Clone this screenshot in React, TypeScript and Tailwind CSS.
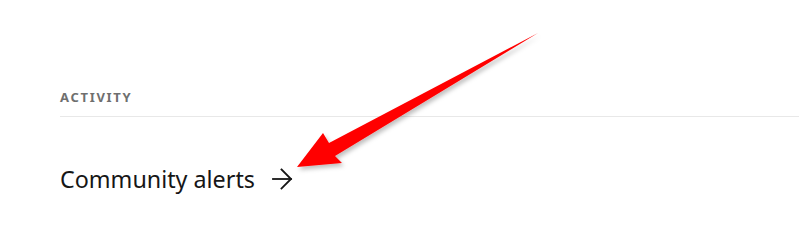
export default function App() {
  return (
    <div className="relative w-[799px] h-[248px] bg-white overflow-hidden" style={{ fontFamily: '"Noto Sans", "Liberation Sans", sans-serif' }}>
      <div className="pl-[60px] pt-[87px]">
        {/* Section header */}
        <div className="pb-[9px] border-b border-[#e8e8e8]">
          <h2 className="text-[13px] leading-[20px] font-bold tracking-[1.7px] text-[#6f6f6f] uppercase">Activity</h2>
        </div>

        <a className="mt-[46px] flex items-center gap-[17px] text-[#161616]">
          <span className="text-[23.3px] leading-[32px]">Community alerts</span>
          <svg width="22" height="22" viewBox="0 0 22 22" fill="none" stroke="currentColor" strokeWidth="1.8" strokeLinecap="square">
            <path d="M1 11h18" />
            <path d="M9.5 1.5 19 11l-9.5 9.5" />
          </svg>
        </a>
      </div>

      {/* Annotation arrow */}
      <svg className="absolute inset-0 pointer-events-none" width="799" height="248" viewBox="0 0 799 248">
        <defs>
          <filter id="sh" x="-10%" y="-10%" width="130%" height="130%">
            <feDropShadow dx="2" dy="3" stdDeviation="2" floodColor="#000" floodOpacity="0.25" />
          </filter>
        </defs>
        <polygon
          points="297,167 323,133 329,143 538,33 335,156 342,163"
          fill="#ff0000"
          filter="url(#sh)"
        />
      </svg>
    </div>
  )
}
